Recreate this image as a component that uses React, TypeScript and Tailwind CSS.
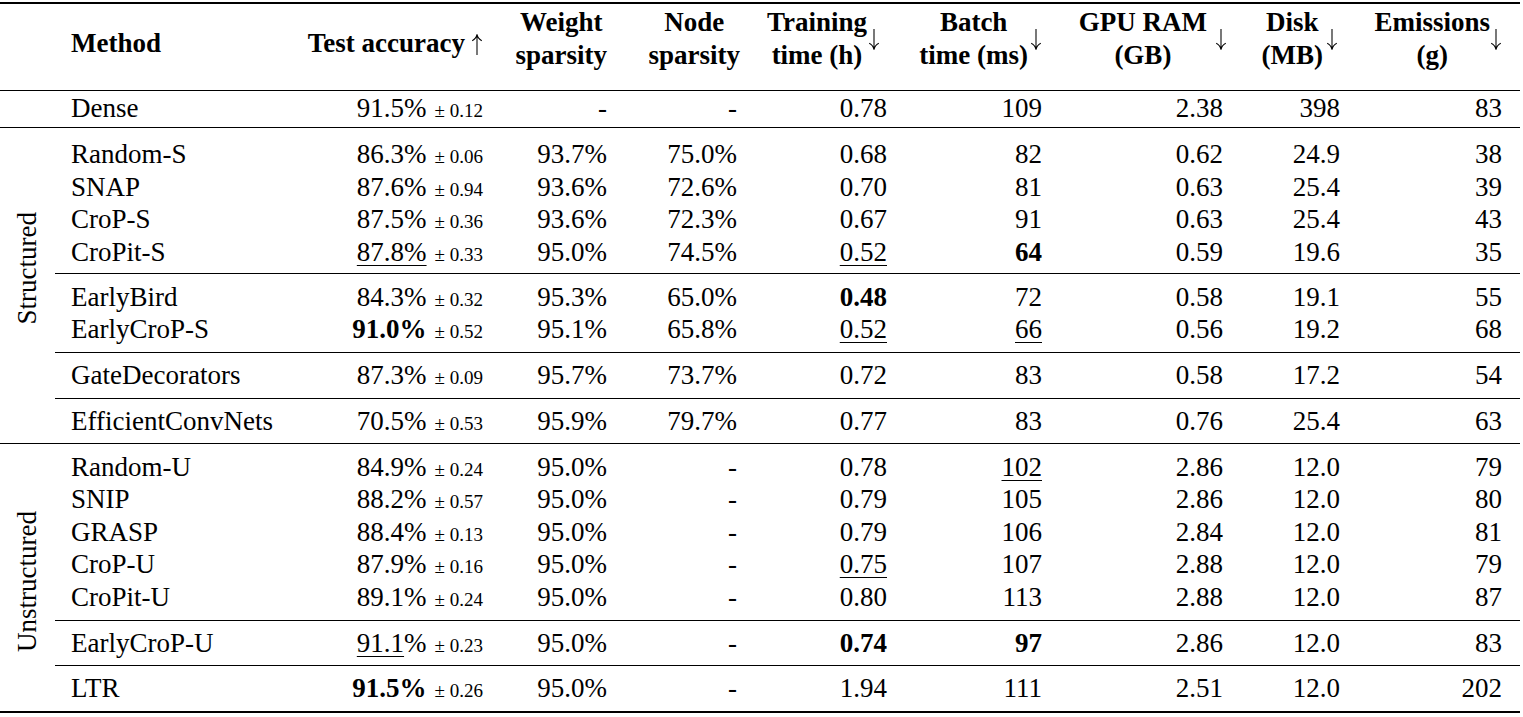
const cols =
  "grid grid-cols-[245px_183px_124px_130px_150px_155px_181px_117px_162px_18px]";

type Row = string[];

// method, acc, pm, weight, node, train, batch, gpu, disk, emissions
// "**" = bold, "__" = underline, "|" splits underlined part from rest
const structured: Row[][] = [
  [
    ["Random-S", "86.3%", "0.06", "93.7%", "75.0%", "0.68", "82", "0.62", "24.9", "38"],
    ["SNAP", "87.6%", "0.94", "93.6%", "72.6%", "0.70", "81", "0.63", "25.4", "39"],
    ["CroP-S", "87.5%", "0.36", "93.6%", "72.3%", "0.67", "91", "0.63", "25.4", "43"],
    ["CroPit-S", "__87.8%", "0.33", "95.0%", "74.5%", "__0.52", "**64", "0.59", "19.6", "35"],
  ],
  [
    ["EarlyBird", "84.3%", "0.32", "95.3%", "65.0%", "**0.48", "72", "0.58", "19.1", "55"],
    ["EarlyCroP-S", "**91.0%", "0.52", "95.1%", "65.8%", "__0.52", "__66", "0.56", "19.2", "68"],
  ],
  [["GateDecorators", "87.3%", "0.09", "95.7%", "73.7%", "0.72", "83", "0.58", "17.2", "54"]],
  [["EfficientConvNets", "70.5%", "0.53", "95.9%", "79.7%", "0.77", "83", "0.76", "25.4", "63"]],
];

const unstructured: Row[][] = [
  [
    ["Random-U", "84.9%", "0.24", "95.0%", "-", "0.78", "__102", "2.86", "12.0", "79"],
    ["SNIP", "88.2%", "0.57", "95.0%", "-", "0.79", "105", "2.86", "12.0", "80"],
    ["GRASP", "88.4%", "0.13", "95.0%", "-", "0.79", "106", "2.84", "12.0", "81"],
    ["CroP-U", "87.9%", "0.16", "95.0%", "-", "__0.75", "107", "2.88", "12.0", "79"],
    ["CroPit-U", "89.1%", "0.24", "95.0%", "-", "0.80", "113", "2.88", "12.0", "87"],
  ],
  [["EarlyCroP-U", "__91.1|%", "0.23", "95.0%", "-", "**0.74", "**97", "2.86", "12.0", "83"]],
  [["LTR", "**91.5%", "0.26", "95.0%", "-", "1.94", "111", "2.51", "12.0", "202"]],
];

const dense: Row = ["Dense", "91.5%", "0.12", "-", "-", "0.78", "109", "2.38", "398", "83"];

function Arrow({ up = false, className = "" }: { up?: boolean; className?: string }) {
  return (
    <svg
      viewBox="0 0 12 22"
      className={"w-[12px] h-[21px] shrink-0 " + className}
      fill="none"
      stroke="black"
      strokeWidth="1.1"
    >
      {up ? (
        <path d="M6 22V1 M1 7Q5 5 6 0.5Q7 5 11 7" />
      ) : (
        <path d="M6 0V21 M1 15Q5 17 6 21.5Q7 17 11 15" />
      )}
    </svg>
  );
}

function Val({ s }: { s: string }) {
  if (s.startsWith("**")) return <span className="font-bold">{s.slice(2)}</span>;
  if (s.startsWith("__")) {
    const [u, rest] = s.slice(2).split("|");
    return (
      <>
        <span className="underline decoration-1 underline-offset-[4px]">{u}</span>
        {rest}
      </>
    );
  }
  return <>{s}</>;
}

function DataRow({ r }: { r: Row }) {
  return (
    <div className={cols + " h-[32.5px] leading-[32.5px]"}>
      <div className="pl-4 whitespace-nowrap">{r[0]}</div>
      <div className="text-right whitespace-nowrap">
        <Val s={r[1]} />
        <span className="ml-2 text-[19px]">± {r[2]}</span>
      </div>
      {r.slice(3).map((c, i) => (
        <div key={i} className="text-right whitespace-nowrap">
          <Val s={c} />
        </div>
      ))}
      <div />
    </div>
  );
}

function Head({
  top,
  bottom,
  arrow,
  className = "",
  arrowClass = "",
}: {
  top: string;
  bottom: string;
  arrow?: boolean;
  className?: string;
  arrowClass?: string;
}) {
  return (
    <div className={"flex justify-end items-start pt-[2px] " + className}>
      <div className="flex items-center">
        <div className="text-center leading-[33px] whitespace-nowrap">
          {top}
          <br />
          {bottom}
        </div>
        {arrow && <Arrow className={arrowClass} />}
      </div>
    </div>
  );
}

function Section({
  label,
  groups,
  labelShift,
  firstPad,
}: {
  label: string;
  groups: Row[][];
  labelShift: string;
  firstPad: string;
}) {
  return (
    <div className="flex">
      <div className="w-[55px] flex items-center justify-center">
        <span className={"[writing-mode:vertical-rl] rotate-180 leading-none whitespace-nowrap " + labelShift}>
          {label}
        </span>
      </div>
      <div className="flex flex-col w-[1465px]">
        {groups.map((g, gi) => (
          <div key={gi}>
            {gi > 0 && <div className="h-px bg-black" />}
            <div className={gi === 0 ? firstPad : g.length > 1 ? "py-[6.5px]" : "py-[6px]"}>
              {g.map((r, ri) => (
                <DataRow key={ri} r={r} />
              ))}
            </div>
          </div>
        ))}
      </div>
    </div>
  );
}

export default function App() {
  return (
    <div className="min-h-screen bg-white text-black [font-family:'Liberation_Serif','Times_New_Roman',serif] text-[27px]">
      <div className="w-[1520px] pt-[2px]">
        <div className="h-[2px] bg-black" />
        {/* header */}
        <div className="flex h-[86px]">
          <div className="w-[55px]" />
          <div className={cols + " font-bold"}>
            <div className="pl-4 pt-[23px] leading-[33px]">Method</div>
            <div className="pt-[23px] flex justify-end items-start whitespace-nowrap">
              <span className="leading-[33px]">Test accuracy</span>
              <Arrow up className="ml-[6px] mt-[7px]" />
            </div>
            <Head top="Weight" bottom="sparsity" />
            <Head top="Node" bottom="sparsity" className="-mr-[3px]" />
            <Head top="Training" bottom="time (h)" arrow className="pr-[7px]" arrowClass="ml-[1px]" />
            <Head top="Batch" bottom="time (ms)" arrow arrowClass="ml-[2px]" />
            <Head top="GPU RAM" bottom="(GB)" arrow className="-mr-[4px]" arrowClass="ml-[8px]" />
            <Head top="Disk" bottom="(MB)" arrow className="pr-[2px]" arrowClass="ml-[3px]" />
            <Head top="Emissions" bottom="(g)" arrow />
            <div />
          </div>
        </div>
        <div className="h-px bg-black" />
        <div className="flex pt-[1px] pb-[2.5px]">
          <div className="w-[55px]" />
          <DataRow r={dense} />
        </div>
        <div className="h-px bg-black" />
        <Section label="Structured" groups={structured} labelShift="-translate-y-[17px]" firstPad="pt-[10px] pb-[5px]" />
        <div className="h-px bg-black" />
        <Section label="Unstructured" groups={unstructured} labelShift="translate-y-[4px]" firstPad="py-[6.5px]" />
        <div className="h-[2px] bg-black" />
      </div>
    </div>
  );
}
